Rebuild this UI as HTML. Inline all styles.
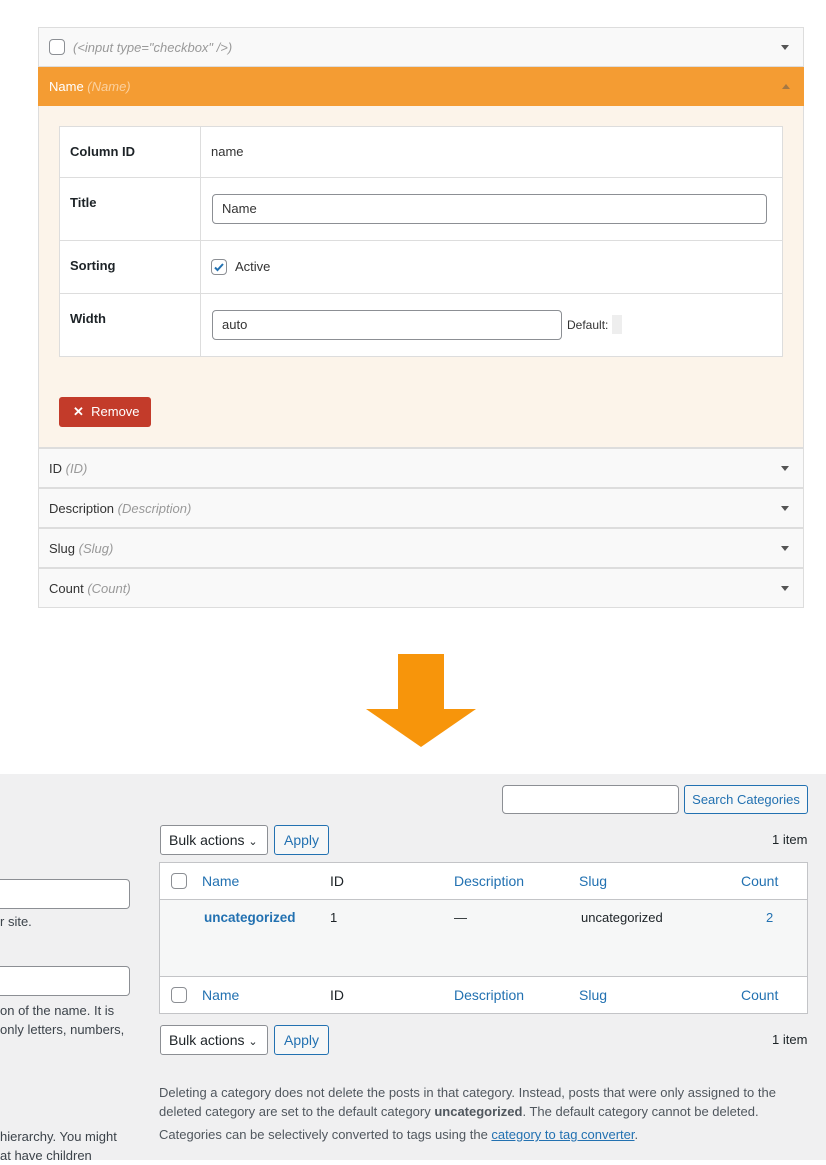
<!DOCTYPE html>
<html><head><style>
*{box-sizing:border-box;margin:0;padding:0}
body{width:826px;height:1160px;position:relative;background:#fff;font-family:"Liberation Sans",sans-serif;font-size:13px;color:#1d2327;overflow:hidden}
.a{position:absolute}
.row{position:absolute;left:38px;width:766px;height:41px;background:#f9f9f9;border:1px solid #ddd;padding:0 10px;line-height:39px;color:#333}
.row i{color:#999}
.arr{position:absolute;right:14px;top:17px;width:0;height:0;border-left:4px solid transparent;border-right:4px solid transparent;border-top:5px solid #555}
.cb{position:absolute;width:16px;height:16px;border:1px solid #8c8f94;border-radius:4px;background:#fff}
.inp{position:absolute;border:1px solid #8c8f94;border-radius:4px;background:#fff;padding-left:9px;line-height:28px;color:#333}
.lk{color:#2271b1}
.btn{position:absolute;border:1px solid #2271b1;border-radius:3px;color:#2271b1;background:#f6f7f7;text-align:center;line-height:28px}
.sel{position:absolute;border:1px solid #8c8f94;border-radius:3px;background:#fff;padding-left:8px;line-height:28px;font-size:14px}
</style></head><body>
<div class="row" style="top:27px;height:40px"><span class="cb" style="left:10px;top:11px"></span><i style="margin-left:24px">(&lt;input type="checkbox" /&gt;)</i><span class="arr"></span></div>
<div class="a" style="left:38px;top:67px;width:766px;height:39px;background:#f49c33;color:#fff;padding-left:11px;line-height:39px">Name <i style="color:#fbd19f">(Name)</i><span class="a" style="right:14px;top:17px;border-left:4px solid transparent;border-right:4px solid transparent;border-bottom:5px solid #a57844"></span></div>
<div class="a" style="left:38px;top:106px;width:766px;height:342px;background:#fcf4ea;border:1px solid #ddd;border-top:0"></div>
<div class="a" style="left:59px;top:126px;width:724px;height:231px;background:#fff;border:1px solid #ddd"></div>
<div class="a" style="left:200px;top:126px;width:1px;height:231px;background:#ddd"></div>
<div class="a" style="left:59px;top:177px;width:724px;height:1px;background:#ddd"></div>
<div class="a" style="left:59px;top:240px;width:724px;height:1px;background:#ddd"></div>
<div class="a" style="left:59px;top:293px;width:724px;height:1px;background:#ddd"></div>
<div class="a" style="left:70px;top:144px;font-weight:bold">Column ID</div>
<div class="a" style="left:211px;top:144px;color:#333">name</div>
<div class="a" style="left:70px;top:195px;font-weight:bold">Title</div>
<div class="inp" style="left:212px;top:194px;width:555px;height:30px">Name</div>
<div class="a" style="left:70px;top:258px;font-weight:bold">Sorting</div>
<div class="cb" style="left:211px;top:259px;color:#2271b1"><svg width="14" height="14" viewBox="0 0 14 14" style="position:absolute;left:0;top:0"><path d="M3 7.5l2.5 2.5L11 4" stroke="#2271b1" stroke-width="2" fill="none"/></svg></div>
<div class="a" style="left:235px;top:259px;color:#333">Active</div>
<div class="a" style="left:70px;top:311px;font-weight:bold">Width</div>
<div class="inp" style="left:212px;top:310px;width:350px;height:30px">auto</div>
<div class="a" style="left:567px;top:318px;font-size:12px;color:#333">Default:</div>
<div class="a" style="left:612px;top:315px;width:10px;height:19px;background:#eee"></div>
<div class="a" style="left:59px;top:397px;width:92px;height:30px;background:#c33b2a;border-radius:3px;color:#fff;line-height:30px;padding-left:14px"><b>✕</b>&nbsp; Remove</div>
<div class="row" style="top:448px;height:40px">ID <i>(ID)</i><span class="arr"></span></div>
<div class="row" style="top:488px;height:40px">Description <i>(Description)</i><span class="arr"></span></div>
<div class="row" style="top:528px;height:40px">Slug <i>(Slug)</i><span class="arr"></span></div>
<div class="row" style="top:568px;height:40px">Count <i>(Count)</i><span class="arr"></span></div>
<div class="a" style="left:398px;top:654px;width:46px;height:56px;background:#f7950b"></div>
<div class="a" style="left:366px;top:709px;width:0;height:0;border-left:55px solid transparent;border-right:55px solid transparent;border-top:38px solid #f7950b"></div>
<div class="a" style="left:0;top:774px;width:826px;height:386px;background:#f0f0f1"></div>
<div class="inp" style="left:502px;top:785px;width:177px;height:29px"></div>
<div class="btn" style="left:684px;top:785px;width:124px;height:29px">Search Categories</div>
<div class="sel" style="left:160px;top:825px;width:108px;height:30px">Bulk actions <span style="font-size:11px">&#8964;</span></div>
<div class="btn" style="left:274px;top:825px;width:55px;height:30px;font-size:14px">Apply</div>
<div class="a" style="left:772px;top:832px">1 item</div>
<div class="inp" style="left:-10px;top:879px;width:140px;height:30px"></div>
<div class="a" style="left:0;top:914px;color:#3c434a">r site.</div>
<div class="inp" style="left:-10px;top:966px;width:140px;height:30px"></div>
<div class="a" style="left:0;top:1001px;line-height:19px;color:#3c434a">on of the name. It is<br>only letters, numbers,</div>
<div class="a" style="left:0;top:1127px;line-height:19px;color:#3c434a">hierarchy. You might<br>at have children</div>
<div class="a" style="left:159px;top:862px;width:649px;height:152px;background:#f6f7f7;border:1px solid #c3c4c7"></div>
<div class="a" style="left:160px;top:863px;width:647px;height:37px;background:#fff;border-bottom:1px solid #c3c4c7"></div>
<div class="a" style="left:160px;top:976px;width:647px;height:37px;background:#fff;border-top:1px solid #c3c4c7"></div>
<div class="cb" style="left:171px;top:873px"></div>
<div class="cb" style="left:171px;top:987px"></div>
<div class="a lk" style="left:202px;top:873px;font-size:14px">Name</div><div class="a" style="left:330px;top:873px;font-size:14px">ID</div><div class="a lk" style="left:454px;top:873px;font-size:14px">Description</div><div class="a lk" style="left:579px;top:873px;font-size:14px">Slug</div><div class="a lk" style="left:741px;top:873px;font-size:14px">Count</div>
<div class="a lk" style="left:202px;top:987px;font-size:14px">Name</div><div class="a" style="left:330px;top:987px;font-size:14px">ID</div><div class="a lk" style="left:454px;top:987px;font-size:14px">Description</div><div class="a lk" style="left:579px;top:987px;font-size:14px">Slug</div><div class="a lk" style="left:741px;top:987px;font-size:14px">Count</div>
<div class="a lk" style="left:204px;top:910px;font-weight:bold;font-size:13.5px">uncategorized</div>
<div class="a" style="left:330px;top:910px">1</div>
<div class="a" style="left:454px;top:910px">—</div>
<div class="a" style="left:581px;top:910px">uncategorized</div>
<div class="a lk" style="left:766px;top:910px">2</div>
<div class="sel" style="left:160px;top:1025px;width:108px;height:30px">Bulk actions <span style="font-size:11px">&#8964;</span></div>
<div class="btn" style="left:274px;top:1025px;width:55px;height:30px;font-size:14px">Apply</div>
<div class="a" style="left:772px;top:1032px">1 item</div>
<div class="a" style="left:159px;top:1083px;line-height:19px;color:#50575e">Deleting a category does not delete the posts in that category. Instead, posts that were only assigned to the<br>deleted category are set to the default category <b>uncategorized</b>. The default category cannot be deleted.</div>
<div class="a" style="left:159px;top:1127px;color:#50575e">Categories can be selectively converted to tags using the <span class="lk" style="text-decoration:underline">category to tag converter</span>.</div>
</body></html>
